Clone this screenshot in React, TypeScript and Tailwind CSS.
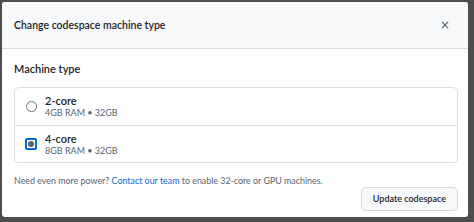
import React, { useState } from 'react';

const machines = [
  { id: '2', name: '2-core', specs: '4GB RAM • 32GB' },
  { id: '4', name: '4-core', specs: '8GB RAM • 32GB' },
];

const CloseIcon = () => (
  <svg width="12" height="12" viewBox="0 0 16 16" className="fill-current">
    <path d="M3.72 3.72a.75.75 0 0 1 1.06 0L8 6.94l3.22-3.22a.75.75 0 1 1 1.06 1.06L9.06 8l3.22 3.22a.75.75 0 1 1-1.06 1.06L8 9.06l-3.22 3.22a.75.75 0 0 1-1.06-1.06L6.94 8 3.72 4.78a.75.75 0 0 1 0-1.06Z" />
  </svg>
);

export default function App() {
  const [selected, setSelected] = useState('4');

  return (
    <div className="w-[474px] h-[222px] bg-[#4d4d4d] pt-[2px] pl-[2px] pr-[6px] pb-[5px] font-['Lato',sans-serif] text-[#1f2328]">
      <div className="h-full bg-white rounded-[3px] flex flex-col overflow-hidden">
        <div className="h-[47px] shrink-0 bg-[#f6f8fa] border-b border-[#d8dee4] flex items-center justify-between pl-[12px] pr-[17px]">
          <h1 className="text-[10.5px] font-semibold leading-[14px]">Change codespace machine type</h1>
          <button className="text-[#59636e]">
            <CloseIcon />
          </button>
        </div>

        <div className="pl-[12px] pr-[10px] pt-[13px]">
          <h2 className="text-[11px] font-semibold leading-[14px]">Machine type</h2>
          <div className="mt-[11px] border border-[#d8dee4] rounded-[5px]">
            {machines.map((m, i) => (
              <label
                key={m.id}
                className={`flex items-center h-[37px] cursor-pointer ${i > 0 ? 'border-t border-[#d8dee4]' : ''}`}
                onClick={() => setSelected(m.id)}
              >
                <span className="w-[30px] flex justify-center pl-[2px]">
                  {selected === m.id ? (
                    <span className="w-[12px] h-[12px] rounded-[2px] border-[2px] border-[#0969da] bg-white flex items-center justify-center">
                      <span className="w-[6px] h-[6px] rounded-full bg-[#59636e]"></span>
                    </span>
                  ) : (
                    <span className="w-[11px] h-[11px] rounded-full border border-[#6e7781] bg-white"></span>
                  )}
                </span>
                <span className="flex flex-col">
                  <span className="text-[11px] font-semibold leading-[13px]">{m.name}</span>
                  <span className="text-[9px] text-[#59636e] leading-[12px]">{m.specs}</span>
                </span>
              </label>
            ))}
          </div>
          <p className="mt-[12px] text-[8.9px] leading-[12px] text-[#59636e]">
            Need even more power? <a className="text-[#0969da]">Contact our team</a> to enable 32-core or GPU machines.
          </p>
          <div className="flex justify-end">
            <button className="h-[24px] px-[11px] rounded-[5px] border border-[#d1d9e0] bg-[#f6f8fa] text-[9px] font-semibold">
              Update codespace
            </button>
          </div>
        </div>
      </div>
    </div>
  );
}
